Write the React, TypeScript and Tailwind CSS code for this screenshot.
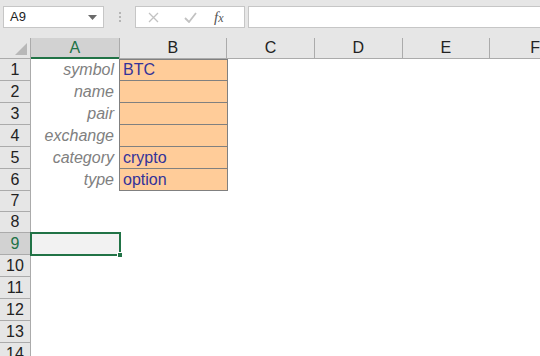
import React from 'react';

const rows = [
  { n: 1, a: 'symbol', b: 'BTC' },
  { n: 2, a: 'name', b: '' },
  { n: 3, a: 'pair', b: '' },
  { n: 4, a: 'exchange', b: '' },
  { n: 5, a: 'category', b: 'crypto' },
  { n: 6, a: 'type', b: 'option' },
];

const cols = [
  { k: 'C', w: 'w-[88px]' },
  { k: 'D', w: 'w-[88px]' },
  { k: 'E', w: 'w-[88px]' },
];

export default function App() {
  const font = { fontFamily: '"Liberation Sans", Arial, sans-serif' };
  return (
    <div className="w-[540px] h-[356px] overflow-hidden bg-white select-none" style={font}>
      {/* formula bar */}
      <div className="h-[38px] bg-[#e6e6e6] flex items-start pt-[6px]">
        <div className="ml-[3px] w-[101px] h-[22px] bg-white border border-[#c6c6c6] flex items-center justify-between pl-[6px] pr-[6px]">
          <span className="text-[13px] text-[#222]">A9</span>
          <svg width="9" height="5" viewBox="0 0 9 5"><path d="M0 0h9L4.5 5z" fill="#6a6a6a" /></svg>
        </div>
        <div className="w-[31px] h-[22px] flex flex-col items-center justify-center gap-[2px]">
          <span className="w-[2px] h-[2px] bg-[#b5b5b5]" />
          <span className="w-[2px] h-[2px] bg-[#b5b5b5]" />
          <span className="w-[2px] h-[2px] bg-[#b5b5b5]" />
        </div>
        <div className="w-[110px] h-[22px] bg-white border border-[#c6c6c6] flex items-center">
          <svg className="ml-[12px]" width="11" height="11" viewBox="0 0 11 11">
            <path d="M1 1l9 9M10 1l-9 9" stroke="#c2c2c2" strokeWidth="1.3" />
          </svg>
          <svg className="ml-[25px]" width="13" height="11" viewBox="0 0 13 11">
            <path d="M1 6l4 4 7-9" fill="none" stroke="#c2c2c2" strokeWidth="1.8" />
          </svg>
          <span className="ml-[17px] text-[15px] italic text-[#555]" style={{ fontFamily: '"Liberation Serif", serif' }}>
            f<span className="text-[12px]">x</span>
          </span>
        </div>
        <div className="ml-[3px] flex-1 h-[22px] bg-white border border-[#c6c6c6] border-r-0" />
      </div>

      {/* column header */}
      <div className="h-[21px] flex bg-[#e6e6e6] border-b border-[#ababab] text-[16px] text-[#222]">
        <div className="w-[31px] h-full border-r border-[#ababab] relative">
          <svg className="absolute right-[3px] bottom-[3px]" width="12" height="12" viewBox="0 0 12 12">
            <path d="M12 0v12H0z" fill="#b8b8b8" />
          </svg>
        </div>
        <div className="w-[89px] h-full bg-[#d2d2d2] border-r border-[#ababab] flex items-center justify-center text-[#217346] relative">
          A
          <div className="absolute left-0 right-0 bottom-[-1px] h-[2px] bg-[#217346]" />
        </div>
        <div className="w-[108px] h-full border-r border-[#ababab] flex items-center justify-center">B</div>
        {cols.map((c) => (
          <div key={c.k} className={`${c.w} h-full border-r border-[#ababab] flex items-center justify-center`}>
            {c.k}
          </div>
        ))}
        <div className="flex-1 h-full flex items-center justify-center pl-[40px]">F</div>
      </div>

      {/* grid */}
      {Array.from({ length: 14 }, (_, i) => {
        const n = i + 1;
        const r = rows[i];
        const sel = n === 9;
        const h = n === 7 || n === 8 ? 'h-[21px]' : 'h-[22px]';
        return (
          <div key={n} className={`${h} flex`}>
            <div
              className={`w-[31px] h-full border-r border-b border-[#ababab] flex items-center justify-center text-[16px] ${
                sel ? 'bg-[#d2d2d2] text-[#217346]' : 'bg-[#e6e6e6] text-[#222]'
              }`}
            >
              {n}
            </div>
            <div className="w-[88px] h-full relative flex items-center justify-end pr-[5px]">
              {r && <span className="text-[16px] italic text-[#808080]">{r.a}</span>}
              {sel && (
                <div className="absolute left-[-1px] top-[-1px] w-[91px] h-[24px] border-2 border-[#217346] bg-[#f2f2f2]">
                  <div className="absolute right-[-4px] bottom-[-4px] w-[6px] h-[6px] bg-[#217346] border border-white" />
                </div>
              )}
            </div>
            {r ? (
              <div
                className={`w-[109px] h-full bg-[#ffcc99] border-l border-r border-b border-[#808080] ${
                  n === 1 ? 'border-t' : ''
                } flex items-center pl-[3px] text-[16px] text-[#333399]`}
              >
                {r.b}
              </div>
            ) : (
              <div className="w-[109px] h-full" />
            )}
            <div className="flex-1 h-full" />
          </div>
        );
      })}
    </div>
  );
}
